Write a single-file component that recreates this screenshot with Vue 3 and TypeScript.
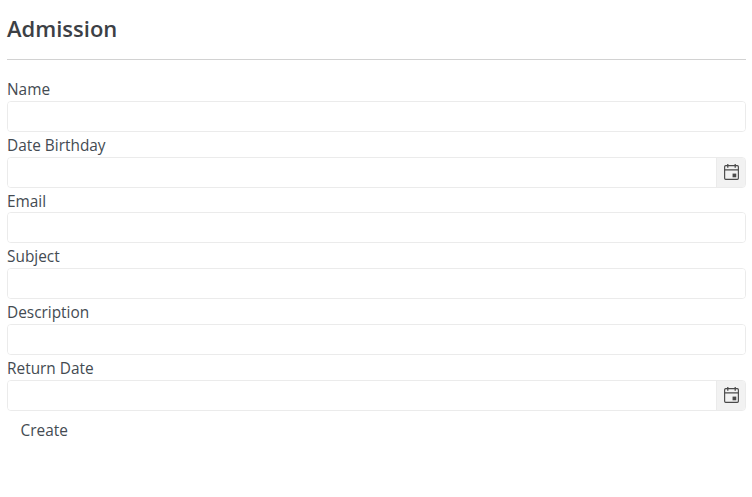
<template>
  <div class="page">
    <h4>Admission</h4>
    <hr />
    <form class="admission-form" @submit.prevent>
      <div v-for="field in fields" :key="field.label" class="field">
        <label>{{ field.label }}</label>
        <div class="input-group">
          <input type="text" />
          <button v-if="field.date" type="button" class="calendar-btn" aria-label="Pick date">
            <svg width="17" height="18" viewBox="0 0 16 17" fill="none">
              <rect x="1.5" y="2.5" width="13" height="13" rx="1" stroke="#4a4a4a" stroke-width="1.1" />
              <path d="M1.5 6.5h13" stroke="#4a4a4a" stroke-width="1.1" />
              <path d="M4.5 1v3.5M11.5 1v3.5" stroke="#4a4a4a" stroke-width="1.2" />
              <rect x="9" y="10" width="3.5" height="3.5" fill="#4a4a4a" />
            </svg>
          </button>
        </div>
      </div>
      <button type="submit" class="create-btn">Create</button>
    </form>
  </div>
</template>

<script setup lang="ts">
type Field = {
  label: string
  date?: boolean
}

const fields: Field[] = [
  { label: 'Name' },
  { label: 'Date Birthday', date: true },
  { label: 'Email' },
  { label: 'Subject' },
  { label: 'Description' },
  { label: 'Return Date', date: true }
]
</script>

<style>
html,
body {
  background: #fff;
}
</style>

<style scoped>
.page {
  padding: 13px 6px 0 7px;
  font-family: "Open Sans", "Noto Sans", sans-serif;
  font-size: 15.4px;
  color: #444b52;
}

h4 {
  margin: 0;
  height: 31px;
  line-height: 30px;
  font-size: 22px;
  font-weight: 600;
  color: #3c4045;
}

hr {
  margin: 15px 0 16px;
  border: none;
  border-top: 1px solid #d2d2d2;
}

.field label {
  display: block;
  height: 24.75px;
  line-height: 27px;
}

.input-group {
  display: flex;
  height: 31px;
  border: 1px solid #ebebeb;
  border-radius: 4px;
  box-sizing: border-box;
  overflow: hidden;
}

input {
  flex: 1;
  min-width: 0;
  border: none;
  outline: none;
  background: #fff;
}

.calendar-btn {
  width: 29px;
  padding: 0;
  display: flex;
  align-items: center;
  justify-content: center;
  border: none;
  border-left: 1px solid #ebebeb;
  background: #f2f2f2;
}

.create-btn {
  display: block;
  margin-top: 4px;
  padding: 4px 13.5px;
  border: none;
  background: transparent;
  font: inherit;
  line-height: 24px;
  color: #444b52;
}
</style>
